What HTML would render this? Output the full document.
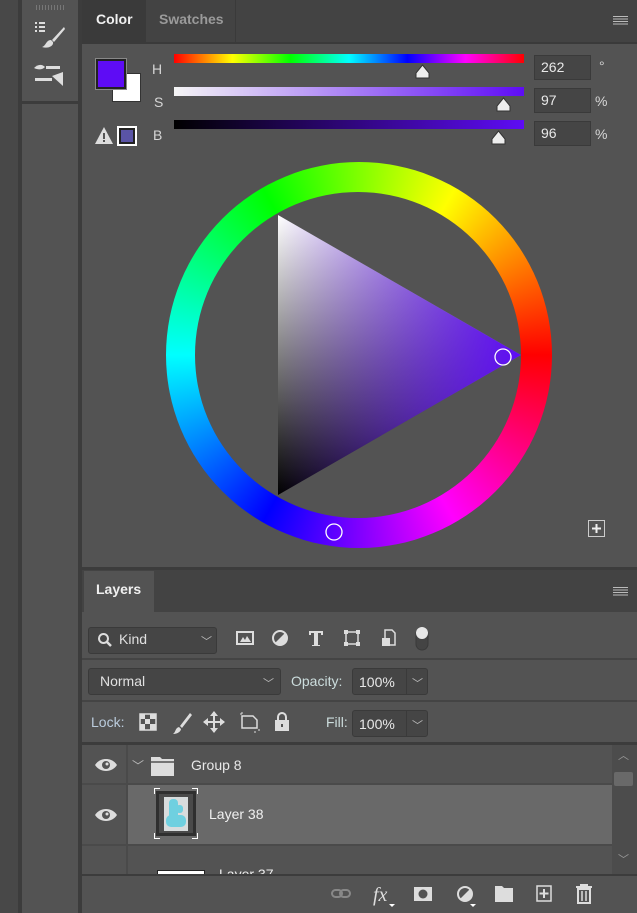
<!DOCTYPE html>
<html><head><style>
*{margin:0;padding:0;box-sizing:border-box}
body{width:637px;height:913px;background:#535353;position:relative;overflow:hidden;font-family:"Liberation Sans",sans-serif;color:#d6d6d6;font-size:14px}
.a{position:absolute}
.inp{position:absolute;background:#454545;border:1px solid #3a3a3a;color:#e8e8e8;font-size:14px;padding-left:6px;line-height:22px}
.sep{position:absolute;left:82px;width:555px;height:2px;background:#444}
</style></head><body>
<div class="a" style="left:0;top:0;width:18px;height:913px;background:#484848"></div>
<div class="a" style="left:18px;top:0;width:4px;height:913px;background:#3c3c3c"></div>
<div class="a" style="left:22px;top:0;width:56px;height:913px;background:#535353"></div>
<div class="a" style="left:78px;top:0;width:4px;height:913px;background:#3c3c3c"></div>
<div class="a" style="left:22px;top:101px;width:56px;height:3px;background:#3c3c3c"></div>
<div class="a" style="left:36px;top:5px;width:28px;height:5px;background:repeating-linear-gradient(90deg,#777 0 1px,transparent 1px 3px)"></div>
<svg class="a" style="left:30px;top:18px" width="40" height="80">
<g fill="#ddd"><rect x="5" y="4" width="2" height="2"/><rect x="9" y="4" width="6" height="2"/><rect x="5" y="8" width="2" height="2"/><rect x="9" y="8" width="6" height="2"/><rect x="5" y="12" width="2" height="2"/><rect x="9" y="12" width="6" height="2"/>
<path d="M34 9 L22 22 L24 24 L35 11Z"/><path d="M21 22 C16 22 16 28 12 29 C18 31 24 28 23 24Z"/>
<path d="M4 50 C8 46 12 46 15 49 C12 52 8 52 4 50Z"/><rect x="16" y="48" width="14" height="3"/>
<rect x="5" y="60" width="17" height="3"/><path d="M22 58 L33 54 L33 68 Z"/></g></svg>
<div class="a" style="left:82px;top:0;width:555px;height:42px;background:#434343"></div>
<div class="a" style="left:82px;top:0;width:64px;height:43px;background:#3a3a3a"></div>
<div class="a" style="left:96px;top:11px;font-weight:bold;color:#f0f0f0">Color</div>
<div class="a" style="left:146px;top:0;width:90px;height:42px;border-right:1px solid #3a3a3a"></div>
<div class="a" style="left:159px;top:11px;font-weight:bold;color:#9a9a9a">Swatches</div>
<div class="a" style="left:613px;top:16px;width:15px;height:10px;background:repeating-linear-gradient(#bbb 0 1px,transparent 1px 2.5px)"></div>
<div class="a" style="left:82px;top:42px;width:555px;height:2px;background:#3a3a3a"></div>
<div class="a" style="left:112px;top:73px;width:29px;height:29px;background:#fff;border:1px solid #333"></div>
<div class="a" style="left:95px;top:58px;width:32px;height:32px;border:1px solid #888;background:#222;padding:2px"><div style="width:26px;height:26px;background:#5e0cf5"></div></div>
<svg class="a" style="left:94px;top:126px" width="20" height="20"><path d="M10 1 L19 18 L1 18Z" fill="#ddd"/><rect x="9" y="7" width="2" height="6" fill="#535353"/><rect x="9" y="14" width="2" height="2" fill="#535353"/></svg>
<div class="a" style="left:117px;top:126px;width:20px;height:20px;background:#222;border:2px solid #fff"><div style="width:16px;height:16px;background:#5a54a6;border:2px solid #222"></div></div>
<div class="a" style="left:152px;top:61px">H</div>
<div class="a" style="left:154px;top:94px">S</div>
<div class="a" style="left:153px;top:127px">B</div>
<div class="a" style="left:174px;top:54px;width:350px;height:9px;background:linear-gradient(90deg,#f00,#ff0 16.7%,#0f0 33.3%,#0ff 50%,#00f 66.7%,#f0f 83.3%,#f00)"></div>
<div class="a" style="left:174px;top:87px;width:350px;height:9px;background:linear-gradient(90deg,#f5f5f5,#5e0cf5)"></div>
<div class="a" style="left:174px;top:120px;width:350px;height:9px;background:linear-gradient(90deg,#000,#5e0cf5)"></div>
<svg class="a" style="left:414px;top:64px" width="17" height="16"><path d="M8.5 1 L15 9 L15 14 L2 14 L2 9Z" fill="#eee" stroke="#333"/></svg>
<svg class="a" style="left:495px;top:97px" width="17" height="16"><path d="M8.5 1 L15 9 L15 14 L2 14 L2 9Z" fill="#eee" stroke="#333"/></svg>
<svg class="a" style="left:490px;top:130px" width="17" height="16"><path d="M8.5 1 L15 9 L15 14 L2 14 L2 9Z" fill="#eee" stroke="#333"/></svg>
<div class="inp" style="left:534px;top:55px;width:57px;height:25px">262</div>
<div class="inp" style="left:534px;top:88px;width:57px;height:25px">97</div>
<div class="inp" style="left:534px;top:121px;width:57px;height:25px">96</div>
<div class="a" style="left:599px;top:58px">°</div>
<div class="a" style="left:595px;top:93px">%</div>
<div class="a" style="left:595px;top:126px">%</div>
<div class="a" style="left:166px;top:162px;width:386px;height:386px;border-radius:50%;background:conic-gradient(from 90deg,#f00,#f0f 60deg,#00f 120deg,#0ff 180deg,#0f0 240deg,#ff0 300deg,#f00 360deg)"></div>
<div class="a" style="left:195px;top:192px;width:326px;height:326px;border-radius:50%;background:#535353"></div>
<svg class="a" style="left:0;top:0" width="637" height="600">
<defs>
<linearGradient id="v" x1="0" y1="215" x2="0" y2="495" gradientUnits="userSpaceOnUse"><stop offset="0" stop-color="#fff"/><stop offset="1" stop-color="#000"/></linearGradient>
<linearGradient id="h" x1="278" y1="0" x2="521" y2="0" gradientUnits="userSpaceOnUse"><stop offset="0" stop-color="#5e0cf5" stop-opacity="0"/><stop offset="1" stop-color="#5e0cf5" stop-opacity="1"/></linearGradient>
</defs>
<path d="M278 215 L521 355 L278 495Z" fill="url(#v)"/>
<path d="M278 215 L521 355 L278 495Z" fill="url(#h)"/>
<circle cx="503" cy="357" r="8" fill="none" stroke="#fff" stroke-width="1.3"/>
<circle cx="334" cy="532" r="8" fill="none" stroke="#fff" stroke-width="1.3"/>
<rect x="588.5" y="520.5" width="16" height="16" fill="none" stroke="#ccc"/>
<path d="M596.5 524v9M592 528.5h9" stroke="#eee" stroke-width="2"/>
</svg>
<div class="a" style="left:82px;top:567px;width:555px;height:3px;background:#3c3c3c"></div>
<div class="a" style="left:82px;top:570px;width:555px;height:42px;background:#434343"></div>
<div class="a" style="left:84px;top:571px;width:70px;height:42px;background:#535353"></div>
<div class="a" style="left:96px;top:581px;font-weight:bold;color:#f0f0f0">Layers</div>
<div class="a" style="left:613px;top:587px;width:15px;height:10px;background:repeating-linear-gradient(#bbb 0 1px,transparent 1px 2.5px)"></div>
<div class="a" style="left:88px;top:627px;width:129px;height:27px;background:#454545;border:1px solid #3a3a3a;border-radius:3px"></div>
<svg class="a" style="left:97px;top:632px" width="16" height="16"><circle cx="6.5" cy="6.5" r="4.5" fill="none" stroke="#ddd" stroke-width="2"/><path d="M10 10 L14 14" stroke="#ddd" stroke-width="2.5"/></svg>
<div class="a" style="left:119px;top:631px;color:#e0e0e0">Kind</div>
<div class="a" style="left:201px;top:633px;color:#bbb;font-size:11px">﹀</div>
<svg class="a" style="left:230px;top:625px" width="205" height="30">
<g fill="none" stroke="#ddd" stroke-width="2"><rect x="7" y="7" width="16" height="12"/></g><path d="M10 17 L13 12 L15 15 L17 11 L21 17Z" fill="#ddd"/>
<circle cx="50" cy="13" r="7" fill="none" stroke="#ddd" stroke-width="2"/><path d="M45 18 A7 7 0 0 0 55 8Z" fill="#ddd"/>
<path d="M79 6 H93 V10 H91 V8 H88 V20 H90 V21 H82 V20 H84 V8 H81 V10 H79Z" fill="#ddd"/>
<rect x="116" y="7" width="12" height="12" fill="none" stroke="#ddd" stroke-width="1.5"/><g fill="#ddd"><rect x="114" y="5" width="4" height="4"/><rect x="126" y="5" width="4" height="4"/><rect x="114" y="17" width="4" height="4"/><rect x="126" y="17" width="4" height="4"/></g>
<path d="M155 5 H162 L165 8 V20 H155Z" fill="none" stroke="#ddd" stroke-width="1.5"/><rect x="152" y="13" width="8" height="8" fill="#ddd"/>
<rect x="186" y="3" width="12" height="22" rx="6" fill="#444" stroke="#3a3a3a"/><circle cx="192" cy="8" r="6" fill="#e8e8e8"/>
</svg>
<div class="sep" style="top:658px"></div>
<div class="a" style="left:88px;top:668px;width:193px;height:27px;background:#454545;border:1px solid #3a3a3a;border-radius:3px"></div>
<div class="a" style="left:100px;top:673px;color:#e0e0e0">Normal</div>
<div class="a" style="left:263px;top:675px;color:#bbb;font-size:11px">﹀</div>
<div class="a" style="left:291px;top:673px;color:#cdd">Opacity:</div>
<div class="inp" style="left:352px;top:668px;width:76px;height:27px;border-radius:3px;padding-top:2px">100%</div>
<div class="a" style="left:406px;top:669px;width:1px;height:25px;background:#3a3a3a"></div>
<div class="a" style="left:412px;top:675px;color:#bbb;font-size:11px">﹀</div>
<div class="sep" style="top:700px"></div>
<div class="a" style="left:91px;top:714px;color:#bcd">Lock:</div>
<svg class="a" style="left:138px;top:710px" width="160" height="26">
<g fill="#ddd"><rect x="2" y="4" width="16" height="16" fill="none" stroke="#ddd" stroke-width="1.5"/><rect x="2" y="4" width="5" height="5"/><rect x="12" y="4" width="6" height="5"/><rect x="7" y="9" width="5" height="5"/><rect x="2" y="14" width="5" height="6"/><rect x="12" y="14" width="6" height="6"/></g>
<path d="M52 3 L42 16 L44 18 L54 5Z M41 17 C37 18 38 22 35 24 C40 24 43 21 43 19Z" fill="#ddd"/>
<path d="M76 2 V22 M66 12 H86" stroke="#ddd" stroke-width="2"/><path d="M76 1 L72 6 H80Z M76 23 L72 18 H80Z M65 12 L70 8 V16Z M87 12 L82 8 V16Z" fill="#ddd"/>
<path d="M104 6 H115 L119 10 V18 H104Z" fill="none" stroke="#ddd" stroke-width="1.5"/><path d="M102 4h2M120 20h2M104 2v2M117 21v2" stroke="#ddd"/>
<rect x="137" y="10" width="14" height="11" fill="#ddd"/><path d="M140 10 V7 A4 4 0 0 1 148 7 V10" fill="none" stroke="#ddd" stroke-width="2"/><rect x="143" y="14" width="2" height="3" fill="#535353"/>
</svg>
<div class="a" style="left:326px;top:714px;color:#cdd">Fill:</div>
<div class="inp" style="left:352px;top:710px;width:76px;height:27px;border-radius:3px;padding-top:2px">100%</div>
<div class="a" style="left:406px;top:711px;width:1px;height:25px;background:#3a3a3a"></div>
<div class="a" style="left:412px;top:717px;color:#bbb;font-size:11px">﹀</div>
<div class="sep" style="top:742px;height:3px;background:#3c3c3c"></div>
<div class="a" style="left:82px;top:745px;width:46px;height:131px;border-right:2px solid #4a4a4a"></div>
<div class="a" style="left:82px;top:783px;width:530px;height:2px;background:#4a4a4a"></div>
<div class="a" style="left:128px;top:785px;width:484px;height:59px;background:#696969"></div>
<div class="a" style="left:82px;top:844px;width:530px;height:2px;background:#4a4a4a"></div>
<svg class="a" style="left:94px;top:757px" width="24" height="16"><path d="M1 8 C6 0 18 0 23 8 C18 16 6 16 1 8Z" fill="#ddd"/><circle cx="12" cy="8" r="4" fill="#535353"/><circle cx="13" cy="7" r="1.5" fill="#ddd"/></svg>
<svg class="a" style="left:94px;top:807px" width="24" height="16"><path d="M1 8 C6 0 18 0 23 8 C18 16 6 16 1 8Z" fill="#ddd"/><circle cx="12" cy="8" r="4" fill="#535353"/><circle cx="13" cy="7" r="1.5" fill="#ddd"/></svg>
<div class="a" style="left:132px;top:757px;color:#bbb;font-size:12px">﹀</div>
<svg class="a" style="left:150px;top:755px" width="26" height="22"><path d="M1 2 H10 L12 4 H24 V21 H1Z" fill="#ddd"/><path d="M1 7 H24" stroke="#535353" stroke-width="1.5"/></svg>
<div class="a" style="left:191px;top:757px;color:#e8e8e8">Group 8</div>
<div class="a" style="left:154px;top:788px;width:44px;height:51px;border:1px solid #fff"></div>
<div class="a" style="left:160px;top:788px;width:32px;height:51px;background:#696969"></div>
<div class="a" style="left:154px;top:794px;width:44px;height:39px;background:#696969"></div>
<div class="a" style="left:156px;top:791px;width:40px;height:45px;background:#2f2f2f;padding:3px"><div style="width:34px;height:39px;background:#4a4a4a;padding:3px 2px"><div style="width:24px;height:34px;margin-left:3px;background:#d8dcdd;position:relative"><div style="position:absolute;left:5px;top:2px;width:9px;height:22px;background:#6fd0e0;border-radius:4px"></div><div style="position:absolute;left:2px;top:18px;width:20px;height:12px;background:#6fd0e0;border-radius:5px"></div><div style="position:absolute;left:12px;top:8px;width:7px;height:8px;background:#6fd0e0;border-radius:3px"></div></div></div></div>
<div class="a" style="left:209px;top:806px;color:#f0f0f0">Layer 38</div>
<div class="a" style="left:157px;top:870px;width:48px;height:8px;border:1px solid #222;background:#fff"></div>
<div class="a" style="left:219px;top:866px;color:#eee">Layer 37</div>
<div class="a" style="left:612px;top:745px;width:25px;height:131px;background:#4c4c4c"></div>
<div class="a" style="left:614px;top:772px;width:19px;height:14px;background:#696969;border-radius:2px"></div>
<div class="a" style="left:618px;top:747px;color:#999;font-size:11px">︿</div>
<div class="a" style="left:618px;top:851px;color:#999;font-size:11px">﹀</div>
<div class="a" style="left:82px;top:874px;width:555px;height:2px;background:#3c3c3c"></div>
<div class="a" style="left:82px;top:876px;width:555px;height:37px;background:#535353"></div>
<svg class="a" style="left:325px;top:880px" width="280" height="30">
<g fill="none" stroke="#888" stroke-width="2"><rect x="7" y="10" width="10" height="7" rx="3.5"/><rect x="15" y="10" width="10" height="7" rx="3.5"/></g>
<text x="48" y="21" font-family="Liberation Serif" font-style="italic" font-size="20" fill="#ddd">fx</text><path d="M64 24 h6 l-3 3z" fill="#fff"/>
<rect x="89" y="7" width="18" height="14" fill="#ddd"/><circle cx="98" cy="14" r="4.5" fill="#535353"/>
<circle cx="140" cy="14" r="7" fill="none" stroke="#ddd" stroke-width="2"/><path d="M135 19 A7 7 0 0 0 145 9Z" fill="#ddd"/><path d="M145 24 h6 l-3 3z" fill="#fff"/>
<path d="M170 6 H177 L179 8 H188 V22 H170Z" fill="#ddd"/>
<rect x="212" y="6" width="14" height="15" fill="none" stroke="#ddd" stroke-width="1.5"/><path d="M219 9v9M214.5 13.5h9" stroke="#ddd" stroke-width="2"/>
<path d="M251 7h16M256 7V5h6v2" stroke="#ddd" stroke-width="2" fill="none"/><rect x="253" y="9" width="12" height="14" fill="none" stroke="#ddd" stroke-width="2"/><path d="M257 11v10M261 11v10" stroke="#ddd" stroke-width="1.5"/>
</svg>
</body></html>
